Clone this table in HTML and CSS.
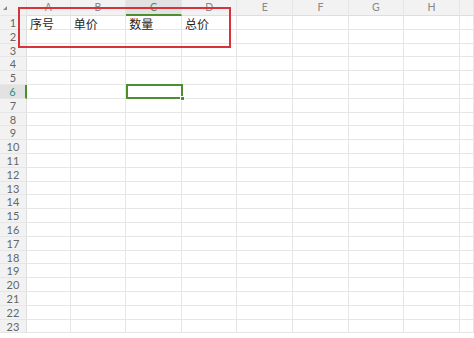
FILE: index.html
```html
<!DOCTYPE html>
<html lang="zh">
<head>
<meta charset="utf-8">
<link rel="stylesheet" href="styles.css">
</head>
<body>
<div class="sheet">
  <div class="grid">
    <div class="corner"><span class="tri"></span></div><div class="ch">A</div><div class="ch">B</div><div class="ch sel">C</div><div class="ch">D</div><div class="ch">E</div><div class="ch">F</div><div class="ch">G</div><div class="ch">H</div><div class="ch"></div>
    <div class="rh">1</div><div class="c txt">序号</div><div class="c txt">单价</div><div class="c txt">数量</div><div class="c txt">总价</div><div class="c"></div><div class="c"></div><div class="c"></div><div class="c"></div><div class="c"></div>
    <div class="rh">2</div><div class="c"></div><div class="c"></div><div class="c"></div><div class="c"></div><div class="c"></div><div class="c"></div><div class="c"></div><div class="c"></div><div class="c"></div>
    <div class="rh">3</div><div class="c"></div><div class="c"></div><div class="c"></div><div class="c"></div><div class="c"></div><div class="c"></div><div class="c"></div><div class="c"></div><div class="c"></div>
    <div class="rh">4</div><div class="c"></div><div class="c"></div><div class="c"></div><div class="c"></div><div class="c"></div><div class="c"></div><div class="c"></div><div class="c"></div><div class="c"></div>
    <div class="rh">5</div><div class="c"></div><div class="c"></div><div class="c"></div><div class="c"></div><div class="c"></div><div class="c"></div><div class="c"></div><div class="c"></div><div class="c"></div>
    <div class="rh sel">6</div><div class="c"></div><div class="c"></div><div class="c"></div><div class="c"></div><div class="c"></div><div class="c"></div><div class="c"></div><div class="c"></div><div class="c"></div>
    <div class="rh">7</div><div class="c"></div><div class="c"></div><div class="c"></div><div class="c"></div><div class="c"></div><div class="c"></div><div class="c"></div><div class="c"></div><div class="c"></div>
    <div class="rh">8</div><div class="c"></div><div class="c"></div><div class="c"></div><div class="c"></div><div class="c"></div><div class="c"></div><div class="c"></div><div class="c"></div><div class="c"></div>
    <div class="rh">9</div><div class="c"></div><div class="c"></div><div class="c"></div><div class="c"></div><div class="c"></div><div class="c"></div><div class="c"></div><div class="c"></div><div class="c"></div>
    <div class="rh">10</div><div class="c"></div><div class="c"></div><div class="c"></div><div class="c"></div><div class="c"></div><div class="c"></div><div class="c"></div><div class="c"></div><div class="c"></div>
    <div class="rh">11</div><div class="c"></div><div class="c"></div><div class="c"></div><div class="c"></div><div class="c"></div><div class="c"></div><div class="c"></div><div class="c"></div><div class="c"></div>
    <div class="rh">12</div><div class="c"></div><div class="c"></div><div class="c"></div><div class="c"></div><div class="c"></div><div class="c"></div><div class="c"></div><div class="c"></div><div class="c"></div>
    <div class="rh">13</div><div class="c"></div><div class="c"></div><div class="c"></div><div class="c"></div><div class="c"></div><div class="c"></div><div class="c"></div><div class="c"></div><div class="c"></div>
    <div class="rh">14</div><div class="c"></div><div class="c"></div><div class="c"></div><div class="c"></div><div class="c"></div><div class="c"></div><div class="c"></div><div class="c"></div><div class="c"></div>
    <div class="rh">15</div><div class="c"></div><div class="c"></div><div class="c"></div><div class="c"></div><div class="c"></div><div class="c"></div><div class="c"></div><div class="c"></div><div class="c"></div>
    <div class="rh">16</div><div class="c"></div><div class="c"></div><div class="c"></div><div class="c"></div><div class="c"></div><div class="c"></div><div class="c"></div><div class="c"></div><div class="c"></div>
    <div class="rh">17</div><div class="c"></div><div class="c"></div><div class="c"></div><div class="c"></div><div class="c"></div><div class="c"></div><div class="c"></div><div class="c"></div><div class="c"></div>
    <div class="rh">18</div><div class="c"></div><div class="c"></div><div class="c"></div><div class="c"></div><div class="c"></div><div class="c"></div><div class="c"></div><div class="c"></div><div class="c"></div>
    <div class="rh">19</div><div class="c"></div><div class="c"></div><div class="c"></div><div class="c"></div><div class="c"></div><div class="c"></div><div class="c"></div><div class="c"></div><div class="c"></div>
    <div class="rh">20</div><div class="c"></div><div class="c"></div><div class="c"></div><div class="c"></div><div class="c"></div><div class="c"></div><div class="c"></div><div class="c"></div><div class="c"></div>
    <div class="rh">21</div><div class="c"></div><div class="c"></div><div class="c"></div><div class="c"></div><div class="c"></div><div class="c"></div><div class="c"></div><div class="c"></div><div class="c"></div>
    <div class="rh">22</div><div class="c"></div><div class="c"></div><div class="c"></div><div class="c"></div><div class="c"></div><div class="c"></div><div class="c"></div><div class="c"></div><div class="c"></div>
    <div class="rh">23</div><div class="c"></div><div class="c"></div><div class="c"></div><div class="c"></div><div class="c"></div><div class="c"></div><div class="c"></div><div class="c"></div><div class="c"></div>
  </div>
  <div class="selection"><span class="handle"></span></div>
  <div class="highlight"></div>
</div>
</body>
</html>
```

FILE: styles.css
```css
html, body {
  margin: 0;
  padding: 0;
  background: #ffffff;
  overflow: hidden;
}

.sheet {
  position: relative;
  width: 474px;
  height: 338px;
  overflow: hidden;
  font-family: "Lato", "Noto Sans", sans-serif;
}

.grid {
  display: grid;
  grid-template-columns: 27px 43.7px repeat(7, 55.6px) 1fr;
  grid-template-rows: 16px repeat(23, 13.8px) 1fr;
  width: 474px;
  height: 338px;
}

.grid > div {
  box-sizing: border-box;
  border-right: 1px solid #e6e6e6;
  border-bottom: 1px solid #e6e6e6;
  min-width: 0;
  overflow: hidden;
}

.corner {
  position: relative;
  background: #f2f2f2;
}

.tri {
  position: absolute;
  left: 3px;
  top: 6px;
  width: 0;
  height: 0;
  border-left: 4px solid transparent;
  border-bottom: 4px solid #8a8a8a;
}

.ch {
  background: #f2f2f2;
  color: #888888;
  font-size: 10.5px;
  line-height: 14px;
  text-align: center;
  border-bottom-color: #dedede !important;
}

.ch.sel {
  background: #e2e2e2;
  color: #3f8f6a;
  border-bottom: 2px solid #4c8f2c !important;
}

.rh {
  background: #f2f2f2;
  color: #666666;
  font-size: 11px;
  line-height: 13px;
  text-align: center;
  border-right-color: #dedede !important;
}

.rh.sel {
  background: #e2e2e2;
  color: #2f8f86;
  border-right: 2px solid #4c8f2c !important;
}

.grid > .c.txt {
  overflow: visible;
  font-family: "Noto Sans CJK SC", sans-serif;
  font-size: 12px;
  line-height: 13px;
  color: #1f1f1f;
  padding-left: 3px;
  padding-top: 1px;
  white-space: nowrap;
}

.selection {
  position: absolute;
  left: 125.5px;
  top: 84px;
  width: 57px;
  height: 15px;
  box-sizing: border-box;
  border: 2px solid #4c8f2c;
}

.handle {
  position: absolute;
  right: -4px;
  bottom: -4px;
  width: 5px;
  height: 5px;
  background: #4c8f2c;
  border: 1px solid #ffffff;
  box-sizing: border-box;
}

.highlight {
  position: absolute;
  left: 18px;
  top: 7px;
  width: 213px;
  height: 41px;
  box-sizing: border-box;
  border: 2px solid #d8323d;
}
```
